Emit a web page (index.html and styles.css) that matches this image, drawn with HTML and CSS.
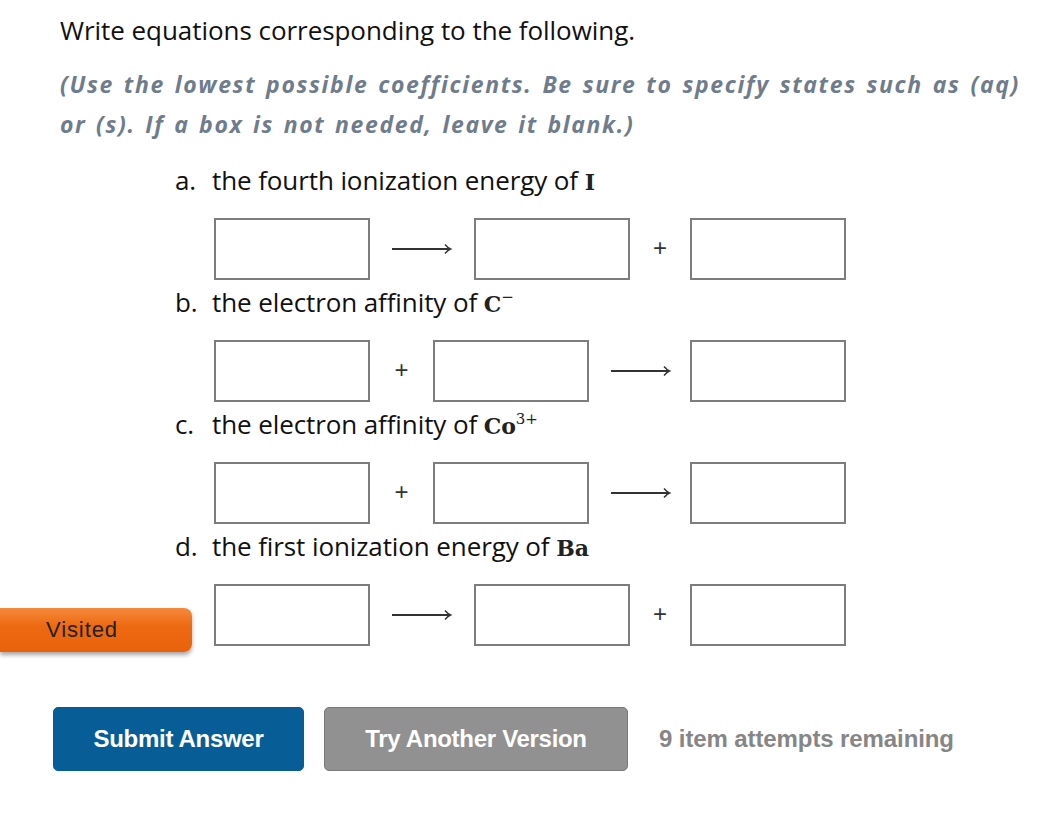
FILE: index.html
```html
<!DOCTYPE html>
<html>
<head>
<meta charset="utf-8">
<link rel="stylesheet" href="styles.css">
</head>
<body>
<div class="visited">Visited</div>
<main class="page">
  <p class="title">Write equations corresponding to the following.</p>
  <p class="note">(Use the lowest possible coefficients. Be sure to specify states such as (aq) or (s). If a box is not needed, leave it blank.)</p>

  <ol class="parts">
    <li class="part">
      <div class="label"><span class="letter">a.</span>the fourth ionization energy of <span class="chem">I</span></div>
      <div class="eq">
        <span class="box"></span>
        <span class="slot arrow"><svg width="62" height="14" viewBox="0 0 62 14"><line x1="1" y1="7" x2="58" y2="7" stroke="#333" stroke-width="2"/><path d="M54 2.5 Q57 6 59.5 7 Q57 8 54 11.5" fill="none" stroke="#333" stroke-width="1.5"/></svg></span>
        <span class="box"></span>
        <span class="slot plus">+</span>
        <span class="box"></span>
      </div>
    </li>
    <li class="part">
      <div class="label"><span class="letter">b.</span>the electron affinity of <span class="chem">C<sup>−</sup></span></div>
      <div class="eq">
        <span class="box"></span>
        <span class="slot plus plus-b">+</span>
        <span class="box"></span>
        <span class="slot arrow arrow-b"><svg width="62" height="14" viewBox="0 0 62 14"><line x1="1" y1="7" x2="58" y2="7" stroke="#333" stroke-width="2"/><path d="M54 2.5 Q57 6 59.5 7 Q57 8 54 11.5" fill="none" stroke="#333" stroke-width="1.5"/></svg></span>
        <span class="box"></span>
      </div>
    </li>
    <li class="part">
      <div class="label"><span class="letter">c.</span>the electron affinity of <span class="chem">Co<sup>3+</sup></span></div>
      <div class="eq">
        <span class="box"></span>
        <span class="slot plus plus-b">+</span>
        <span class="box"></span>
        <span class="slot arrow arrow-b"><svg width="62" height="14" viewBox="0 0 62 14"><line x1="1" y1="7" x2="58" y2="7" stroke="#333" stroke-width="2"/><path d="M54 2.5 Q57 6 59.5 7 Q57 8 54 11.5" fill="none" stroke="#333" stroke-width="1.5"/></svg></span>
        <span class="box"></span>
      </div>
    </li>
    <li class="part">
      <div class="label"><span class="letter">d.</span>the first ionization energy of <span class="chem">Ba</span></div>
      <div class="eq">
        <span class="box"></span>
        <span class="slot arrow"><svg width="62" height="14" viewBox="0 0 62 14"><line x1="1" y1="7" x2="58" y2="7" stroke="#333" stroke-width="2"/><path d="M54 2.5 Q57 6 59.5 7 Q57 8 54 11.5" fill="none" stroke="#333" stroke-width="1.5"/></svg></span>
        <span class="box"></span>
        <span class="slot plus">+</span>
        <span class="box"></span>
      </div>
    </li>
  </ol>

  <div class="actions">
    <button class="btn submit">Submit Answer</button>
    <button class="btn another">Try Another Version</button>
    <span class="remaining">9 item attempts remaining</span>
  </div>
</main>
</body>
</html>
```

FILE: styles.css
```css
html, body {
  margin: 0;
  padding: 0;
  background: #ffffff;
}

body {
  font-family: "Open Sans", "Liberation Sans", sans-serif;
  color: #1a1a1a;
  width: 1043px;
  height: 824px;
  overflow: hidden;
  position: relative;
}

.page {
  padding: 15px 23px 0 60px;
}

.title {
  margin: 0;
  font-size: 26px;
  line-height: 30px;
  color: #111;
  letter-spacing: -0.05px;
}

.note {
  margin: 19px 0 0 0;
  font-size: 23px;
  line-height: 40px;
  font-style: italic;
  font-weight: 700;
  color: #6f7c8c;
  text-align: justify;
  letter-spacing: 1.65px;
  word-spacing: 2px;
}

.parts {
  list-style: none;
  margin: 21px 0 0 0;
  padding: 0 0 0 115px;
}

.part + .part {
  margin-top: 7px;
}

.label {
  font-size: 26px;
  line-height: 30px;
  height: 30px;
  color: #111;
  white-space: nowrap;
  letter-spacing: -0.1px;
}

.letter {
  display: inline-block;
  width: 37px;
}

.chem {
  font-family: "DejaVu Serif", "Liberation Serif", serif;
  font-weight: 700;
  font-size: 22px;
  line-height: 1;
  color: #222;
}

.chem sup {
  font-size: 15px;
  font-weight: 400;
  vertical-align: 10px;
  line-height: 0;
}

.eq {
  display: flex;
  align-items: center;
  margin: 23px 0 0 39px;
  height: 62px;
}

.box {
  display: block;
  width: 152px;
  height: 58px;
  border: 2px solid #7d7d7d;
  background: #fff;
}

.slot {
  display: flex;
  align-items: center;
  justify-content: center;
  height: 62px;
}

.arrow {
  width: 104px;
  justify-content: flex-start;
  padding-left: 21px;
  box-sizing: border-box;
}

.arrow-b {
  width: 101px;
}

.plus {
  width: 60px;
  font-size: 24px;
  font-family: "Liberation Sans", Arial, sans-serif;
  color: #333;
  padding-bottom: 3px;
  box-sizing: border-box;
}

.plus-b {
  width: 63px;
}

.visited {
  position: absolute;
  left: 0;
  top: 608px;
  width: 192px;
  height: 44px;
  box-sizing: border-box;
  padding-left: 46px;
  display: flex;
  align-items: center;
  font-family: "Liberation Sans", Arial, sans-serif;
  font-size: 22px;
  letter-spacing: 0.9px;
  color: #222;
  background: linear-gradient(to bottom, #f58a3c 0%, #ee6a12 40%, #e8620b 100%);
  border-radius: 0 8px 8px 0;
  box-shadow: 0 3px 4px rgba(0, 0, 0, 0.35);
}

.actions {
  display: flex;
  align-items: center;
  margin: 61px 0 0 -7px;
}

.btn {
  font-family: "Liberation Sans", Arial, sans-serif;
  font-weight: 700;
  font-size: 24px;
  color: #fff;
  height: 64px;
  border-radius: 5px;
  cursor: pointer;
  letter-spacing: -0.3px;
  padding: 0;
}

.submit {
  width: 251px;
  background: #075e97;
  border: 1px solid #075e97;
}

.another {
  width: 304px;
  margin-left: 20px;
  background: #919191;
  border: 1px solid #7a7a7a;
}

.remaining {
  margin-left: 31px;
  font-family: "Liberation Sans", Arial, sans-serif;
  font-weight: 700;
  font-size: 24px;
  color: #868686;
  letter-spacing: -0.1px;
}
```
